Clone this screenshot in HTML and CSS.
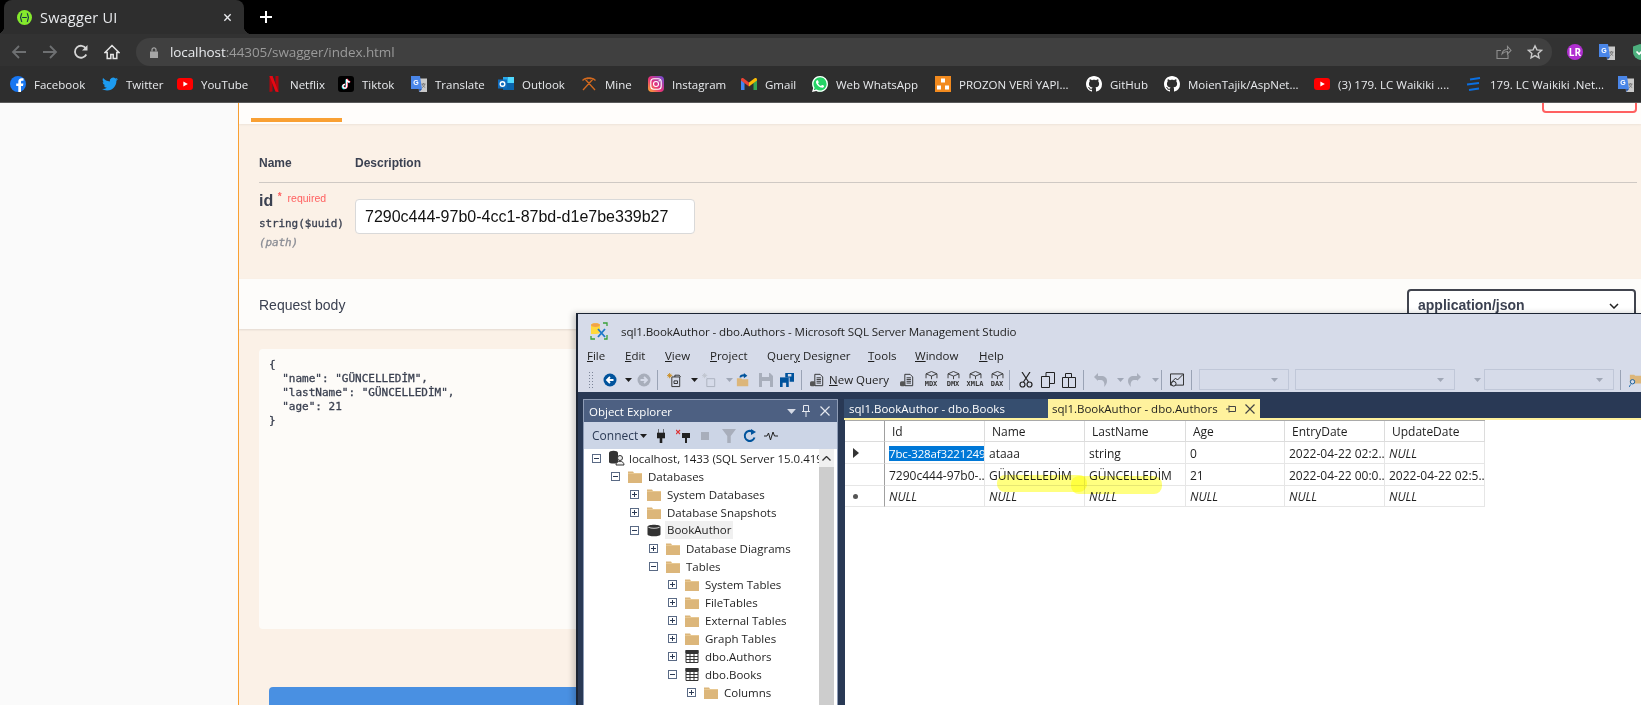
FILE: index.html
```html
<!DOCTYPE html>
<html lang="en">
<head>
<meta charset="utf-8">
<title>Swagger UI</title>
<link rel="stylesheet" href="styles.css">
</head>
<body>
<svg class="sprite" aria-hidden="true">
  <defs>
    <linearGradient id="ig" x1="0" y1="1" x2="1" y2="0"><stop offset="0" stop-color="#fdb32b"/><stop offset=".45" stop-color="#e6317a"/><stop offset="1" stop-color="#6a4fd8"/></linearGradient>
    <symbol id="yt" viewBox="0 0 16 12"><rect width="16" height="12" rx="3" fill="#f00"/><path d="M6.4 3.4v5.2L10.8 6z" fill="#fff"/></symbol>
    <symbol id="tr" viewBox="0 0 16 16"><path d="M7 2.500h9V16H8z" fill="#c9c9c9"/><path d="M0 0h9l2 13H0z" fill="#4a86e8"/><path d="M11 13l-2.600 3L8 13z" fill="#2a56a8"/><text x="2.300" y="8.600" class="svg-g">G</text><path d="M10.500 8h4M12.500 7v1M11.200 8c.5 2 1.800 3 3 3.500M13.800 8c-.4 1.800-1.400 3-2.800 3.600" fill="none" stroke="#777" stroke-width=".9"/></symbol>
    <symbol id="gh" viewBox="0 0 16 16"><path fill="#fff" d="M8 0C3.580 0 0 3.580 0 8c0 3.540 2.290 6.530 5.470 7.590.4.070.55-.17.55-.38 0-.19-.01-.82-.01-1.490-2.010.37-2.530-.49-2.690-.94-.09-.23-.48-.94-.82-1.130-.28-.15-.68-.52-.01-.53.63-.01 1.080.58 1.230.82.72 1.210 1.870.87 2.330.66.070-.52.28-.87.51-1.070-1.780-.2-3.640-.89-3.640-3.950 0-.87.31-1.590.82-2.150-.08-.2-.36-1.020.08-2.120 0 0 .67-.21 2.200.82.64-.18 1.320-.27 2-.27.68 0 1.360.09 2 .27 1.530-1.040 2.200-.82 2.200-.82.44 1.100.16 1.920.08 2.120.51.56.82 1.270.82 2.150 0 3.070-1.870 3.750-3.650 3.950.29.25.54.73.54 1.480 0 1.070-.01 1.930-.01 2.200 0 .21.15.46.55.38A8.013 8.013 0 0016 8c0-4.420-3.580-8-8-8z"/></symbol>
    <symbol id="folder" viewBox="0 0 14 13"><path d="M0 1.500h5l1 1.500h8v10H0z" fill="#dcb67a"/><path d="M0 3h14v1H0z" fill="#e8c891"/></symbol>
    <symbol id="plus" viewBox="0 0 9 9"><rect x=".5" y=".5" width="8" height="8" fill="#fff" stroke="#5a6a85"/><path d="M2 4.500h5M4.500 2v5" stroke="#2b3a55"/></symbol>
    <symbol id="minus" viewBox="0 0 9 9"><rect x=".5" y=".5" width="8" height="8" fill="#fff" stroke="#5a6a85"/><path d="M2 4.500h5" stroke="#2b3a55"/></symbol>
    <symbol id="table" viewBox="0 0 13 13"><path d="M.5.500h12v12H.5zM.5 3.500h12M.5 6.500h12M.5 9.500h12M4.500 3.500v9M8.500 3.500v9" fill="none" stroke="#333"/><path d="M0 0h13v3H0z" fill="#333"/></symbol>
    <symbol id="caret" viewBox="0 0 7 4"><path d="M0 0h7L3.500 4z" fill="currentColor"/></symbol>
    <symbol id="doc" viewBox="0 0 16 16"><path d="M5.500 1.500h6l3 3v10h-9zM7.500 5.500h5M7.500 7.500h5M7.500 9.500h5M7.500 11.500h5" fill="none" stroke="#222"/><path d="M0 11c0-2.200 6-2.200 6 0v3c0 1.600-6 1.600-6 0z" fill="#555"/></symbol>
    <symbol id="cube" viewBox="0 0 16 11"><path d="M8 .5l6 2.600V8M2 8V3.100L8 .5M2 3.100l6 2.500 6-2.500M8 5.600V9" fill="none" stroke="#333"/></symbol>
  </defs>
</svg>

<header class="chrome">
  <div class="tabstrip">
    <div class="tab">
      <svg class="favicon" viewBox="0 0 16 16"><circle cx="8" cy="8" r="8" fill="#85ea2d"/><path d="M5.500 3.500C3.800 3.500 5 8 3.200 8 5 8 3.800 12.500 5.500 12.500M10.500 3.500C12.200 3.500 11 8 12.800 8 11 8 12.200 12.500 10.500 12.500M5.500 8h5" fill="none" stroke="#173647" stroke-width="1.300"/></svg>
      <span class="tab-title">Swagger UI</span>
      <svg class="tab-x" viewBox="0 0 10 10"><path d="M1.500 1.500l7 7M8.500 1.500l-7 7" stroke="#e8eaed" stroke-width="1.500"/></svg>
    </div>
    <svg class="newtab" viewBox="0 0 12 12"><path d="M6 0v12M0 6h12" stroke="#fff" stroke-width="2"/></svg>
  </div>
  <div class="toolbar">
    <svg class="nav" viewBox="0 0 16 16"><path d="M15 8H2M8 2L2 8l6 6" fill="none" stroke="#6e7072" stroke-width="1.800"/></svg>
    <svg class="nav" viewBox="0 0 16 16"><path d="M1 8h13M8 2l6 6-6 6" fill="none" stroke="#6e7072" stroke-width="1.800"/></svg>
    <svg class="nav" viewBox="0 0 16 16"><path d="M13.300 10.500A6 6 0 1 1 13 4.500" fill="none" stroke="#d6d6d6" stroke-width="1.800"/><path d="M14.500 1v5.500H9z" fill="#d6d6d6"/></svg>
    <svg class="nav" viewBox="0 0 16 16"><path d="M8 1.500L1 8.500h2.200v6h3.600v-4h2.400v4h3.600v-6H15z" fill="none" stroke="#e4e4e4" stroke-width="1.500"/></svg>
    <div class="omnibox">
      <svg class="lock" viewBox="0 0 8 11"><path d="M0 4.500h8V11H0z" fill="#a6a6a6"/><path d="M2 4.500V2.800a2 2 0 0 1 4 0v1.700" fill="none" stroke="#a6a6a6" stroke-width="1.200"/></svg>
      <span class="url"><b>localhost</b>:44305/swagger/index.html</span>
      <svg class="omni-ico" viewBox="0 0 16 16"><path d="M5 6.500H1v8h11v-4M6 10c.5-3 3-4.500 5.500-4.500V2.500L15 6.500 11.500 10V7.500C9.500 7.500 7.500 8.300 6 10z" fill="none" stroke="#8e8e8e" stroke-width="1.100"/></svg>
      <svg class="omni-ico omni-star" viewBox="0 0 16 16"><path d="M8 1.800l1.900 4.100 4.500.5-3.300 3 .9 4.400L8 11.600 4 13.800l.9-4.400-3.300-3 4.500-.5z" fill="none" stroke="#c9c9c9" stroke-width="1.400"/></svg>
    </div>
    <div class="ext ext-lr"><span>LR</span></div>
    <svg class="ext"><use href="#tr"/></svg>
    <svg class="ext ext-shield" viewBox="0 0 16 16"><path d="M8 0l7 2.500V8c0 4-3.500 7-7 8-3.500-1-7-4-7-8V2.500z" fill="#4caf7d"/><path d="M4.500 7.500l2.600 2.600 4.400-4.400" fill="none" stroke="#fff" stroke-width="1.700"/></svg>
  </div>
  <nav class="bookmarks">
    <a class="bm"><svg viewBox="0 0 16 16"><circle cx="8" cy="8" r="8" fill="#1877f2"/><path d="M11 16V10h2l.4-2.500H11V6c0-.8.3-1.300 1.400-1.300h1.100V2.500C13.200 2.400 12.400 2.300 11.600 2.300 9.600 2.300 8.300 3.500 8.300 5.700v1.800H6.200V10h2.100v6z" fill="#fff"/></svg><span>Facebook</span></a>
    <a class="bm"><svg viewBox="0 0 24 24"><path fill="#1d9bf0" d="M23.953 4.570a10 10 0 01-2.825.775 4.958 4.958 0 002.163-2.723c-.951.555-2.005.959-3.127 1.184a4.920 4.920 0 00-8.384 4.482C7.690 8.095 4.067 6.130 1.640 3.162a4.822 4.822 0 00-.666 2.475c0 1.710.870 3.213 2.188 4.096a4.904 4.904 0 01-2.228-.616v.060a4.923 4.923 0 003.946 4.827 4.996 4.996 0 01-2.212.085 4.936 4.936 0 004.604 3.417 9.867 9.867 0 01-6.102 2.105c-.390 0-.779-.023-1.170-.067a13.995 13.995 0 007.557 2.209c9.053 0 13.998-7.496 13.998-13.985 0-.210 0-.420-.015-.630A9.935 9.935 0 0024 4.590z"/></svg><span>Twitter</span></a>
    <a class="bm"><svg><use href="#yt"/></svg><span>YouTube</span></a>
    <a class="bm"><svg viewBox="0 0 16 16"><path d="M3.500 0h3l3 9V0h3v16l-3-.5-3-8.500v8.500l-3 .5z" fill="#b1060f"/><path d="M3.500 0h3l6 16-3-.5z" fill="#e50914"/></svg><span>Netflix</span></a>
    <a class="bm"><svg viewBox="0 0 16 16"><rect width="16" height="16" rx="3" fill="#000"/><path d="M8.700 3v7.300a1.900 1.900 0 1 1-1.700-1.900M8.700 3c.3 1.700 1.400 2.800 3.100 3" fill="none" stroke="#25f4ee" stroke-width="1.500" transform="translate(-.5 .4)"/><path d="M8.700 3v7.300a1.900 1.900 0 1 1-1.700-1.900M8.700 3c.3 1.700 1.400 2.800 3.100 3" fill="none" stroke="#fe2c55" stroke-width="1.500" transform="translate(.5 -.2)"/><path d="M8.700 3v7.300a1.900 1.900 0 1 1-1.700-1.900M8.700 3c.3 1.700 1.400 2.800 3.100 3" fill="none" stroke="#fff" stroke-width="1.300"/></svg><span>Tiktok</span></a>
    <a class="bm"><svg><use href="#tr"/></svg><span>Translate</span></a>
    <a class="bm"><svg viewBox="0 0 16 16"><path d="M5 1h11v13H5z" fill="#28a8ea"/><path d="M10 1h6v6h-6z" fill="#50d9ff"/><path d="M5 7h11v7H5z" fill="#0a64ad"/><rect y="3.500" width="9" height="9" fill="#0f6cbd"/><circle cx="4.500" cy="8" r="2.300" fill="none" stroke="#fff" stroke-width="1.400"/></svg><span>Outlook</span></a>
    <a class="bm"><svg viewBox="0 0 16 16"><path d="M2 14L12 3M14 14L4 3M1.500 4.500C4 1.500 8 1.500 10 3M14.500 4.500C12 1.500 8 1.500 6 3" fill="none" stroke="#d2691e" stroke-width="1.300"/></svg><span>Mine</span></a>
    <a class="bm"><svg viewBox="0 0 16 16"><rect width="16" height="16" rx="4" fill="url(#ig)"/><rect x="2.800" y="2.800" width="10.400" height="10.400" rx="3" fill="none" stroke="#fff" stroke-width="1.100"/><circle cx="8" cy="8" r="2.500" fill="none" stroke="#fff" stroke-width="1.100"/><circle cx="11.200" cy="4.800" r=".7" fill="#fff"/></svg><span>Instagram</span></a>
    <a class="bm"><svg viewBox="0 0 16 12"><path d="M0 1.500V12h3.500V5z" fill="#4285f4"/><path d="M12.500 5V12H16V1.500z" fill="#34a853"/><path d="M0 1.500C0 0 1.500-.5 2.700.4L8 4.500v4L0 2.500z" fill="#ea4335"/><path d="M16 1.500C16 0 14.500-.5 13.300.4L8 4.500v4l8-6z" fill="#fbbc04"/></svg><span>Gmail</span></a>
    <a class="bm"><svg viewBox="0 0 24 24"><circle cx="12" cy="12" r="11.500" fill="#25d366"/><path fill="#fff" d="M17.472 14.382c-.297-.149-1.758-.867-2.030-.967-.273-.099-.471-.148-.670.150-.197.297-.767.966-.940 1.164-.173.199-.347.223-.644.075-.297-.150-1.255-.463-2.390-1.475-.883-.788-1.480-1.761-1.653-2.059-.173-.297-.018-.458.130-.606.134-.133.298-.347.446-.520.149-.174.198-.298.298-.497.099-.198.050-.371-.025-.520-.075-.149-.669-1.612-.916-2.207-.242-.579-.487-.500-.669-.510-.173-.008-.371-.010-.570-.010-.198 0-.520.074-.792.372-.272.297-1.040 1.016-1.040 2.479 0 1.462 1.065 2.875 1.213 3.074.149.198 2.096 3.200 5.077 4.487.709.306 1.262.489 1.694.625.712.227 1.360.195 1.871.118.571-.085 1.758-.719 2.006-1.413.248-.694.248-1.289.173-1.413-.074-.124-.272-.198-.570-.347m-5.421 7.403h-.004a9.870 9.870 0 01-5.031-1.378l-.361-.214-3.741.982.998-3.648-.235-.374a9.860 9.860 0 01-1.510-5.260c.001-5.450 4.436-9.884 9.888-9.884 2.640 0 5.122 1.030 6.988 2.898a9.825 9.825 0 012.893 6.994c-.003 5.450-4.437 9.884-9.885 9.884m8.413-18.297A11.815 11.815 0 0012.050 0C5.495 0 .160 5.335.157 11.892c0 2.096.547 4.142 1.588 5.945L.057 24l6.305-1.654a11.882 11.882 0 005.683 1.448h.005c6.554 0 11.890-5.335 11.893-11.893a11.821 11.821 0 00-3.480-8.413z"/></svg><span>Web WhatsApp</span></a>
    <a class="bm"><svg viewBox="0 0 16 16"><rect width="16" height="16" fill="#f28a1e"/><path d="M6 2.500h4v4H6zM2 9.500h4v4H2zM10 9.500h4v4h-4z" fill="#fff"/></svg><span>PROZON VERİ YAPI...</span></a>
    <a class="bm"><svg><use href="#gh"/></svg><span>GitHub</span></a>
    <a class="bm"><svg><use href="#gh"/></svg><span>MoienTajik/AspNet...</span></a>
    <a class="bm"><svg><use href="#yt"/></svg><span>(3) 179. LC Waikiki ....</span></a>
    <a class="bm"><svg viewBox="0 0 16 16"><path d="M4 3.500L14 2M1 8.500l12-1.500M3 14l10-1.500" fill="none" stroke="#0b6fe0" stroke-width="1.800"/></svg><span>179. LC Waikiki .Net...</span></a>
    <a class="bm"><svg><use href="#tr"/></svg></a>
  </nav>
</header>

<div class="page">
  <aside class="sidebar"></aside>
  <main class="main">
    <div class="op-tabs">
      <div class="op-tab"><span>Parameters</span></div>
      <div class="cancel">Cancel</div>
    </div>
    <section class="params">
      <div class="params-head"><span>Name</span><span>Description</span></div>
      <div class="param-row">
        <div class="param-name">
          <div class="param-id">id <sup>*</sup><em>required</em></div>
          <div class="param-type">string($uuid)</div>
          <div class="param-in">(path)</div>
        </div>
        <input class="param-input" value="7290c444-97b0-4cc1-87bd-d1e7be339b27">
      </div>
    </section>
    <section class="req-head">
      <span>Request body</span>
      <div class="media">application/json<svg viewBox="0 0 10 6"><path d="M1 1l4 4 4-4" fill="none" stroke="#222" stroke-width="1.500"/></svg></div>
    </section>
    <section class="req-body">
<pre class="code">{
  "name": "GÜNCELLEDİM",
  "lastName": "GÜNCELLEDİM",
  "age": 21
}</pre>
      <div class="exec"></div>
    </section>
  </main>
</div>

<div class="ssms">
  <div class="ss-title">
    <svg class="ss-logo" viewBox="0 0 18 18"><path d="M1 3c0-2.500 9-2.500 9 0v7c0 1-2 2-4 2H1z" fill="#ffd83b"/><path d="M1 3c0-2.500 9-2.500 9 0s-9 2.500-9 0z" fill="#f2a24a"/><path d="M1 14v3h4M13 1h4v3M17 13v4h-3" fill="none" stroke="#3aa13a" stroke-width="1.300"/><path d="M8 15l7-8M15 15L8 7" stroke="#1e78c8" stroke-width="1.800"/></svg>
    <span>sql1.BookAuthor - dbo.Authors - Microsoft SQL Server Management Studio</span>
  </div>
  <div class="ss-menu">
    <span><u>F</u>ile</span><span><u>E</u>dit</span><span><u>V</u>iew</span><span><u>P</u>roject</span><span>Quer<u>y</u> Designer</span><span><u>T</u>ools</span><span><u>W</u>indow</span><span><u>H</u>elp</span>
  </div>
  <div class="ss-tools">
    <i class="grip"></i>
    <svg class="t16" viewBox="0 0 14 14"><circle cx="7" cy="7" r="6.500" fill="#00539c"/><path d="M10.500 7H4.500M7 4L4 7l3 3" fill="none" stroke="#fff" stroke-width="1.800"/></svg>
    <svg class="car"><use href="#caret"/></svg>
    <svg class="t16" viewBox="0 0 14 14"><circle cx="7" cy="7" r="6.500" fill="#a8aebb"/><path d="M3.500 7h6M7 4l3 3-3 3" fill="none" stroke="#d6dbe9" stroke-width="1.800"/></svg>
    <i class="sep"></i>
    <svg class="t16" viewBox="0 0 16 16"><path d="M5.500 4.500h9v11h-9zM9 4.500v-2h5l1.500 2" fill="none" stroke="#222"/><path d="M8 9h4v3H8z" fill="none" stroke="#222"/><path d="M3 0v6M0 3h6M1 1l4 4M5 1L1 5" stroke="#c98a1a"/></svg>
    <svg class="car"><use href="#caret"/></svg>
    <svg class="t16" viewBox="0 0 16 16"><path d="M5.500 6.500h9v9h-9z" fill="none" stroke="#a8aebb"/><path d="M3 0v6M0 3h6M1 1l4 4M5 1L1 5" stroke="#bfc4ce"/></svg>
    <svg class="car dim"><use href="#caret"/></svg>
    <svg class="t16" viewBox="0 0 16 16"><path d="M1 6h5l1 1h7v8H1z" fill="#dcb67a"/><path d="M4 5c0-2.500 2-3.500 5-3.500V0l4 3-4 3V4C7 4 6 4.500 6 5z" fill="#00539c"/></svg>
    <svg class="t16 s14" viewBox="0 0 14 14"><path d="M0 0h11l3 3v11H0z" fill="#a8aebb"/><path d="M3 0h7v4H3zM3 8h8v6H3z" fill="#d6dbe9"/></svg>
    <svg class="t16" viewBox="0 0 16 16"><path d="M0 5h10v11H0z" fill="#00539c"/><path d="M6 0h10v10h-5V5H6z" fill="#00539c"/><path d="M3 11h4v5H3zM9 1h4v3H9z" fill="#d6dbe9"/></svg>
    <i class="sep"></i>
    <svg class="t16"><use href="#doc"/></svg>
    <span class="newq"><u>N</u>ew Query</span>
    <svg class="t16"><use href="#doc"/></svg>
    <div class="mq"><svg><use href="#cube"/></svg><b>MDX</b></div>
    <div class="mq"><svg><use href="#cube"/></svg><b>DMX</b></div>
    <div class="mq"><svg><use href="#cube"/></svg><b>XMLA</b></div>
    <div class="mq"><svg><use href="#cube"/></svg><b>DAX</b></div>
    <i class="sep"></i>
    <svg class="t16" viewBox="0 0 14 16"><path d="M3 0l6.500 10M11 0L4.500 10" stroke="#222" stroke-width="1.200"/><circle cx="3.500" cy="12.500" r="2.500" fill="none" stroke="#222" stroke-width="1.200"/><circle cx="10.500" cy="12.500" r="2.500" fill="none" stroke="#222" stroke-width="1.200"/></svg>
    <svg class="t16" viewBox="0 0 14 16"><path d="M.5 4.500h8v11h-8zM5 4.500V.5h8.500v11H8.500" fill="none" stroke="#222"/></svg>
    <svg class="t16" viewBox="0 0 14 16"><path d="M.5 5.500h6v10h-6zM6.500 5.500h7v10h-7M3.500 5.500V1.500h6v4" fill="none" stroke="#222"/></svg>
    <i class="sep"></i>
    <svg class="t16" viewBox="0 0 14 16"><path d="M5 9l-4-4 4-4v3h3c4 0 6 2 6 5 0 2-1 4-3 6 1-3 0-7-3-7H5z" fill="#a8aebb"/></svg>
    <svg class="car dim"><use href="#caret"/></svg>
    <svg class="t16" viewBox="0 0 14 16"><path d="M9 9l4-4-4-4v3H6C2 4 0 6 0 9c0 2 1 4 3 6-1-3 0-7 3-7h3z" fill="#a8aebb"/></svg>
    <svg class="car dim"><use href="#caret"/></svg>
    <i class="sep"></i>
    <svg class="t16" viewBox="0 0 15 16"><path d="M.5 1.500h14v12H.5zM1 11L6 6l2 2 6-6" fill="none" stroke="#222"/><circle cx="4" cy="12" r="2.500" fill="#d6dbe9" stroke="#222"/></svg>
    <i class="sep"></i>
    <div class="combo c1"><svg class="car dim"><use href="#caret"/></svg></div>
    <div class="combo c2"><svg class="car dim"><use href="#caret"/></svg></div>
    <svg class="car dim"><use href="#caret"/></svg>
    <div class="combo c3"><svg class="car dim"><use href="#caret"/></svg></div>
    <i class="sep"></i>
    <svg class="t16" viewBox="0 0 16 16"><path d="M1 2h5l1 1h9v9H1z" fill="#dcb67a"/><circle cx="4" cy="10" r="2.500" fill="#d6dbe9" stroke="#00539c"/><path d="M2 13l-2 3" stroke="#00539c"/></svg>
  </div>
  <div class="ss-body">
    <section class="oe">
      <div class="oe-head">
        <span>Object Explorer</span>
        <svg class="oe-caret"><use href="#caret"/></svg>
        <svg class="oe-pin" viewBox="0 0 8 12"><path d="M1.500.5h5v6h-5zM0 6.500h8M4 6.500V12" fill="none" stroke="#e6e9f0"/></svg>
        <svg class="oe-x" viewBox="0 0 10 10"><path d="M.5.500l9 9M9.500.500l-9 9" stroke="#e6e9f0" stroke-width="1.200"/></svg>
      </div>
      <div class="oe-tools">
        <span class="connect">Connect</span>
        <svg class="car"><use href="#caret"/></svg>
        <svg class="oe-ico narrow" viewBox="0 0 8 14"><path d="M1.500 0v4M6.500 0v4M0 4h8v5H5v5H3V9H0z" fill="#222" stroke="#222" stroke-width=".6"/></svg>
        <svg class="oe-ico" viewBox="0 0 14 14"><path d="M0 1l4 4M4 1L0 5" stroke="#d33" stroke-width="1.200"/><path d="M7.500 0v4M12.500 0v4M6 4h8v5h-3v5H9V9H6z" fill="#222"/></svg>
        <svg class="oe-ico narrow" viewBox="0 0 8 8"><rect width="8" height="8" fill="#a8aebb"/></svg>
        <svg class="oe-ico" viewBox="0 0 12 12"><path d="M0 0h12L7.500 6v6h-3V6z" fill="#a8aebb"/></svg>
        <svg class="oe-ico" viewBox="0 0 14 14"><path d="M11.500 8.500A5 5 0 1 1 9.500 2.700" fill="none" stroke="#00539c" stroke-width="2"/><path d="M8 0l5 3-5 3z" fill="#00539c"/></svg>
        <svg class="oe-ico" viewBox="0 0 14 10"><path d="M0 5h3l1.500-3 2 7L9 1l1.500 4H14" fill="none" stroke="#222"/></svg>
      </div>
      <div class="oe-tree">
        <div class="tree-rows">
          <div class="row l0"><svg class="exp"><use href="#minus"/></svg><svg class="srv" viewBox="0 0 16 16"><path d="M0 3c0-3 9-3 9 0v9c0 2-9 2-9 0z" fill="#333"/><circle cx="11" cy="8" r="2.500" fill="#eee" stroke="#333"/><path d="M7 15c0-5 8-5 8 0z" fill="#eee" stroke="#333"/></svg><span class="wide-txt">localhost, 1433 (SQL Server 15.0.4198</span></div>
          <div class="row l1"><svg class="exp"><use href="#minus"/></svg><svg class="fld"><use href="#folder"/></svg><span>Databases</span></div>
          <div class="row l2"><svg class="exp"><use href="#plus"/></svg><svg class="fld"><use href="#folder"/></svg><span>System Databases</span></div>
          <div class="row l2"><svg class="exp"><use href="#plus"/></svg><svg class="fld"><use href="#folder"/></svg><span>Database Snapshots</span></div>
          <div class="row l2"><svg class="exp"><use href="#minus"/></svg><svg class="fld" viewBox="0 0 14 14"><path d="M0 3c0-3 14-3 14 0v8c0 3-14 3-14 0z" fill="#333"/><path d="M1 3.500c3 1.500 9 1.500 12 0" fill="none" stroke="#ddd"/></svg><span class="hl">BookAuthor</span></div>
          <div class="row l3"><svg class="exp"><use href="#plus"/></svg><svg class="fld"><use href="#folder"/></svg><span>Database Diagrams</span></div>
          <div class="row l3"><svg class="exp"><use href="#minus"/></svg><svg class="fld"><use href="#folder"/></svg><span>Tables</span></div>
          <div class="row l4"><svg class="exp"><use href="#plus"/></svg><svg class="fld"><use href="#folder"/></svg><span>System Tables</span></div>
          <div class="row l4"><svg class="exp"><use href="#plus"/></svg><svg class="fld"><use href="#folder"/></svg><span>FileTables</span></div>
          <div class="row l4"><svg class="exp"><use href="#plus"/></svg><svg class="fld"><use href="#folder"/></svg><span>External Tables</span></div>
          <div class="row l4"><svg class="exp"><use href="#plus"/></svg><svg class="fld"><use href="#folder"/></svg><span>Graph Tables</span></div>
          <div class="row l4"><svg class="exp"><use href="#plus"/></svg><svg class="fld"><use href="#table"/></svg><span>dbo.Authors</span></div>
          <div class="row l4"><svg class="exp"><use href="#minus"/></svg><svg class="fld"><use href="#table"/></svg><span>dbo.Books</span></div>
          <div class="row l5"><svg class="exp"><use href="#plus"/></svg><svg class="fld"><use href="#folder"/></svg><span>Columns</span></div>
          <div class="row l5"><i class="exp"></i><svg class="fld"><use href="#folder"/></svg></div>
        </div>
        <div class="vscroll"><div class="vs-up"><svg viewBox="0 0 9 5"><path d="M.5 4.500l4-4 4 4" fill="none" stroke="#333" stroke-width="1.300"/></svg></div></div>
      </div>
    </section>
    <section class="doc">
      <div class="doc-tabs">
        <div class="dt dt-off">sql1.BookAuthor - dbo.Books</div>
        <div class="dt dt-on">
          <span>sql1.BookAuthor - dbo.Authors</span>
          <svg class="dt-pin" viewBox="0 0 10 8"><path d="M0 4h3M3 .5v7M3 1.500h6.500v5H3" fill="none" stroke="#444"/></svg>
          <svg class="dt-x" viewBox="0 0 10 10"><path d="M.5.500l9 9M9.500.500l-9 9" stroke="#444" stroke-width="1.200"/></svg>
        </div>
      </div>
      <div class="doc-rule"></div>
      <div class="doc-grid">
        <div class="grid">
          <div class="c h"></div><div class="c h t">Id</div><div class="c h t">Name</div><div class="c h t">LastName</div><div class="c h t">Age</div><div class="c h t">EntryDate</div><div class="c h t">UpdateDate</div>
          <div class="c m"><svg class="m-arrow" viewBox="0 0 6 10"><path d="M0 0l6 5-6 5z" fill="#333"/></svg></div><div class="c d"><span class="sel">7bc-328af3221249</span></div><div class="c d">ataaa</div><div class="c d">string</div><div class="c d">0</div><div class="c d">2022-04-22 02:2...</div><div class="c d n">NULL</div>
          <div class="c m"></div><div class="c d">7290c444-97b0-...</div><div class="c d">GÜNCELLEDİM</div><div class="c d">GÜNCELLEDİM</div><div class="c d">21</div><div class="c d">2022-04-22 00:0...</div><div class="c d">2022-04-22 02:5...</div>
          <div class="c m"><i class="m-dot"></i></div><div class="c d n">NULL</div><div class="c d n">NULL</div><div class="c d n">NULL</div><div class="c d n">NULL</div><div class="c d n">NULL</div><div class="c d n">NULL</div>
        </div>
        <i class="marker mk1"></i>
        <i class="marker mk2"></i>
      </div>
    </section>
  </div>
</div>
</body>
</html>
```

FILE: styles.css
```css
* { box-sizing: border-box; }
html, body { margin: 0; height: 705px; overflow: hidden; }
body { display: flex; flex-direction: column; background: #fafafa; font-family: "Liberation Sans", Arial, sans-serif; position: relative; }
.sprite { position: absolute; width: 0; height: 0; }
.svg-g { font: bold 7px "Liberation Sans", sans-serif; fill: #fff; }

/* browser chrome */
.chrome { flex: none; height: 103px; background: #2e2e2e; border-bottom: 1px solid #5a5a5a; font-family: "Open Sans", sans-serif; color: #e8eaed; }
.tabstrip { height: 34px; background: #000; display: flex; align-items: stretch; padding-left: 4px; }
.tab { width: 240px; background: #2e2e2e; border-radius: 8px 8px 0 0; display: flex; align-items: center; padding: 0 0 0 13px; position: relative; }
.tab::before, .tab::after { content: ""; position: absolute; bottom: 0; width: 8px; height: 8px; }
.tab::before { left: -8px; background: radial-gradient(circle at 0 0, #000 8px, #2e2e2e 8.5px); }
.tab::after { right: -8px; background: radial-gradient(circle at 100% 0, #000 8px, #2e2e2e 8.5px); }
.favicon { width: 15px; height: 15px; }
.tab-title { font-size: 14.5px; letter-spacing: .2px; margin-left: 8px; flex: 1; }
.tab-x { width: 9px; height: 9px; margin-right: 12px; }
.newtab { width: 12px; height: 12px; margin: 11px 0 0 16px; }
.toolbar { height: 32px; display: flex; align-items: center; padding: 4px 0 0 11px; background: #323232; }
.nav { width: 16px; height: 16px; margin-right: 15px; flex: none; }
.omnibox { width: 1416px; height: 28px; margin-left: 1px; flex: none; background: #404040; border-radius: 14px; display: flex; align-items: center; padding-left: 14px; }
.lock { width: 8px; height: 11px; flex: none; }
.url { font-size: 13.5px; color: #9a9a9a; margin-left: 12px; flex: 1; letter-spacing: -.1px; }
.url b { font-weight: 400; color: #e8eaed; }
.omni-ico { width: 16px; height: 16px; margin-right: 15px; flex: none; }
.omni-star { margin-right: 9px; }
.ext { width: 16px; height: 16px; flex: none; margin-left: 16px; }
.ext-lr { margin-left: 15px; border-radius: 50%; background: #b02fd0; color: #fff; font-size: 10px; font-weight: 700; text-align: center; line-height: 16px; }
.ext-shield { margin-left: 17px; margin-right: -6px; }
.bookmarks { height: 36px; display: grid; grid-template-columns: 92px 75px 89px 72px 73px 87px 83px 67px 93px 71px 123px 151px 78px 150px 152px 152px 16px; align-items: center; padding-left: 10px; background: #2e2e2e; overflow: hidden; }
.bm { display: flex; align-items: center; font-size: 11.5px; white-space: nowrap; color: #e8eaed; }
.bm svg { width: 16px; height: 16px; flex: none; margin-right: 8px; }

/* swagger page */
.page { flex: 1; display: flex; min-height: 0; overflow: hidden; }
.sidebar { width: 238px; flex: none; background: #fafafa; }
.main { flex: 1; border-left: 1px solid #f9a033; color: #3b4151; background: #fbf1e7; display: flex; flex-direction: column; min-width: 0; }
.op-tabs { height: 21px; flex: none; background: #fffdfb; display: flex; justify-content: space-between; overflow: hidden; padding: 0 4px 0 12px; box-shadow: 0 1px 2px rgba(0,0,0,.06); position: relative; }
.op-tab { width: 91px; height: 19px; border-bottom: 4px solid #f9a033; font-size: 14px; font-weight: 700; overflow: hidden; }
.op-tab span { display: block; margin: -13px 0 0 8px; line-height: 17px; }
.cancel { width: 95px; height: 30px; margin-top: -20px; border: 2px solid #ff6060; border-radius: 4px; color: #ff6060; font-size: 14px; font-weight: 700; text-align: center; line-height: 26px; }
.params { height: 155px; flex: none; padding: 0 4px 0 20px; }
.params-head { height: 59px; border-bottom: 1px solid #cfc9c4; display: grid; grid-template-columns: 96px 1fr; align-items: end; padding-bottom: 12px; font-size: 12px; font-weight: 700; }
.param-row { display: grid; grid-template-columns: 96px 340px; padding-top: 16px; }
.param-id { font-size: 16px; font-weight: 700; line-height: 20px; margin-top: -11px; white-space: nowrap; }
.param-id sup { color: #ff6060; font-size: 10px; position: relative; top: -1px; vertical-align: 5px; line-height: 0; }
.param-id em { color: #ff6060; font-size: 10.500px; font-weight: 400; font-style: normal; margin-left: 6px; vertical-align: 4px; }
.param-type, .param-in { font-family: "DejaVu Sans Mono", monospace; font-size: 11px; line-height: 19px; letter-spacing: -.1px; -webkit-text-stroke: .3px currentColor; }
.param-type { margin-top: 3px; }
.param-in { font-style: italic; color: #8a8d95; }
.param-input { width: 340px; height: 35px; border: 1px solid #d9d9d9; border-radius: 4px; background: #fff; font: 16px "Liberation Sans", sans-serif; color: #111; padding: 0 9px; margin-top: 0; outline: none; }
.req-head { height: 50px; flex: none; background: #fdfcfa; padding: 10px 5px 0 20px; display: flex; justify-content: space-between; align-items: flex-start; box-shadow: 0 1px 2px rgba(0,0,0,.1); position: relative; font-size: 14px; }
.req-head > span { margin-top: 8px; }
.media { width: 229px; height: 36px; border: 2px solid #41444e; border-radius: 4px; font-weight: 700; padding: 6px 9px; display: flex; justify-content: space-between; align-items: flex-start; background: #fff; }
.media svg { width: 10px; height: 6px; margin: 6px 6px 0 0; }
.req-body { flex: 1; padding: 20px 0 0 20px; }
.code { margin: 0; width: 1360px; height: 280px; background: #fdfbf8; border-radius: 4px; padding: 9px 10px; font-family: "DejaVu Sans Mono", monospace; font-size: 11px; line-height: 14px; color: #3b4151; -webkit-text-stroke: .3px currentColor; }
.exec { width: 1340px; height: 40px; margin: 58px 0 0 10px; background: #4990e2; border-radius: 4px; }

/* SSMS window */
.ssms { position: absolute; left: 576px; top: 313px; right: 0; bottom: 0; background: #d6dbe9; border: 1px solid #1b2433; border-width: 1px 0 0 2px; box-shadow: -3px 0 6px rgba(0,0,0,.2); display: flex; flex-direction: column; font-family: "Open Sans", sans-serif; font-size: 11.5px; color: #1e1e1e; overflow: hidden; }
.ss-title { height: 31px; flex: none; display: flex; align-items: center; padding: 3px 0 0 12px; font-size: 11.6px; }
.ss-title span { margin-left: 13px; letter-spacing: -.1px; }
.ss-logo { width: 18px; height: 18px; }
.ss-menu { height: 22px; flex: none; display: grid; grid-template-columns: 38px 40px 45px 57px 101px 47px 64px 40px; align-items: center; padding: 0 0 2px 9px; }
.ss-tools { height: 25px; flex: none; display: grid; grid-template-columns: 15px 22px 12px 20px 10px 24px 11px 24px 10px 23px 21px 21px 9px 19px 71px 22px 22px 22px 22px 21px 10px 22px 21px 21px 10px 24px 11px 24px 9px 9px 21px 8px 96px 179px 10px 136px 9px 16px; align-items: center; padding-left: 10px; }
.grip { width: 7px; height: 18px; background-image: radial-gradient(circle, #7c8598 .8px, transparent 1px); background-size: 3px 3px; }
.sep { width: 1px; height: 20px; background: #9aa3b5; }
.t16 { width: 14px; height: 16px; color: #222; }
.s14 { height: 14px; }
.car { width: 7px; height: 4px; color: #1e1e1e; }
.dim { color: #a0a7b6; }
.newq { font-size: 11.5px; white-space: nowrap; }
.mq { width: 18px; height: 18px; display: flex; flex-direction: column; align-items: center; }
.mq svg { width: 15px; height: 10px; flex: none; }
.mq b { font: 700 7px "DejaVu Sans Mono", monospace; line-height: 7px; color: #333; white-space: nowrap; }
.combo { height: 21px; border: 1px solid #c0c7d8; background: #d6dbe9; display: flex; justify-content: flex-end; align-items: center; padding-right: 10px; }
.c1 { width: 90px; }
.c2 { width: 160px; }
.c3 { width: 130px; }
.ss-body { flex: 1; min-height: 0; background: #293955; display: flex; padding: 7px 0 0 5px; }
.oe { width: 255px; flex: none; border: 1px solid #8e9cb6; border-bottom: 0; display: flex; flex-direction: column; margin-right: 6px; background: #fff; }
.oe-head { height: 22px; flex: none; background: #4d6082; color: #fff; display: flex; align-items: center; padding-left: 5px; font-size: 11.5px; }
.oe-head span { flex: 1; }
.oe-caret { width: 9px; height: 5px; color: #d5dae6; margin-right: 6px; }
.oe-pin { width: 8px; height: 12px; margin-right: 10px; }
.oe-x { width: 10px; height: 10px; margin-right: 7px; }
.oe-tools { height: 27px; flex: none; background: #ccd5e6; display: grid; grid-template-columns: 48px 17px 19px 25px 21px 21px 21px 14px; align-items: center; padding-left: 8px; color: #2b3a55; font-size: 12px; }
.oe-ico { width: 14px; height: 14px; }
.oe-ico.narrow { width: 8px; }
.oe-tree { flex: 1; min-height: 0; display: flex; color: #1e1e1e; }
.tree-rows { flex: 1; min-width: 0; overflow: hidden; }
.row { height: 18px; display: flex; align-items: center; white-space: nowrap; font-size: 11.5px; }
.l0 { padding-left: 8px; }
.l1 { padding-left: 27px; }
.l2 { padding-left: 46px; }
.l3 { padding-left: 65px; }
.l4 { padding-left: 84px; }
.l5 { padding-left: 103px; }
.exp { width: 9px; height: 9px; flex: none; margin-right: 8px; }
.fld { width: 14px; height: 13px; flex: none; margin-right: 6px; }
.srv { width: 16px; height: 16px; flex: none; margin-right: 4px; }
.hl { background: #f0f0f0; line-height: 18px; padding: 0 2px; margin-left: -2px; }
.wide-txt { overflow: hidden; }
.vscroll { width: 15px; flex: none; background: #cdcdcd; margin-right: 3px; }
.vs-up { height: 18px; background: #f0f0f0; display: flex; align-items: center; justify-content: center; }
.vs-up svg { width: 9px; height: 5px; }
.doc { flex: 1; min-width: 0; display: flex; flex-direction: column; }
.doc-tabs { height: 19px; flex: none; display: flex; }
.dt { display: flex; align-items: center; height: 19px; padding-left: 5px; font-size: 11.5px; }
.dt-off { width: 204px; background: #364e6f; color: #fff; }
.dt-on { width: 212px; background: #fff29d; color: #1e1e1e; padding-left: 4px; }
.dt-on span { flex: 1; }
.dt-pin { width: 10px; height: 8px; margin-right: 9px; }
.dt-x { width: 10px; height: 10px; margin-right: 5px; }
.doc-rule { height: 2px; flex: none; background: #fff29d; }
.doc-grid { flex: 1; background: #fff; position: relative; margin-left: 1px; }
.grid { display: grid; width: 640px; grid-template-columns: 40px 100px 100px 101px 99px 100px 100px; grid-template-rows: 21px 22px 22px 21px; border-top: 1px solid #a9a9a9; font-size: 12px; color: #1e1e1e; white-space: nowrap; }
.c { border-right: 1px solid #e6e6e6; border-bottom: 1px solid #e6e6e6; display: flex; align-items: center; overflow: hidden; padding-top: 1px; }
.c.h { border-color: #dcdcdc; }
.c.t { padding-left: 7px; }
.c.m { border-right-color: #a0a0a0; padding-left: 8px; }
.c.h:first-child { border-right-color: #a0a0a0; }
.c.d { padding-left: 4px; }
.n { font-style: italic; }
.sel { background: #0078d7; color: #fff; line-height: 15px; width: 95px; overflow: hidden; display: block; font-size: 11.5px; letter-spacing: -.15px; }
.m-arrow { width: 6px; height: 10px; }
.m-dot { width: 5px; height: 5px; border-radius: 50%; background: #555; display: block; }
.marker { position: absolute; background: #ffff80; mix-blend-mode: multiply; border-radius: 8px; }
.mk1 { left: 152px; top: 55px; width: 90px; height: 17px; }
.mk2 { left: 226px; top: 56px; width: 91px; height: 18px; }
```
